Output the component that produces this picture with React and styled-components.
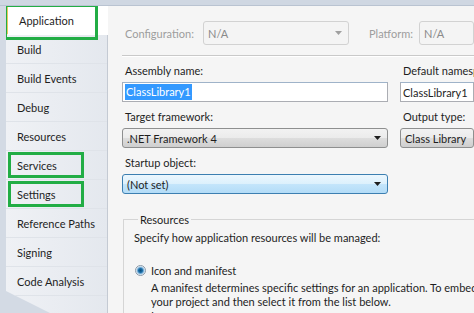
import styled, { createGlobalStyle } from "styled-components";

const GlobalStyle = createGlobalStyle`
    html, body {
        margin: 0;
        padding: 0;
        width: 474px;
        height: 313px;
        overflow: hidden;
        background: #d3dae4;
    }
    * {
        box-sizing: border-box;
    }
`

const tabs = [
    { name: "Application", selected: true, marked: true },
    { name: "Build" },
    { name: "Build Events" },
    { name: "Debug" },
    { name: "Resources" },
    { name: "Services", marked: true },
    { name: "Settings", marked: true },
    { name: "Reference Paths" },
    { name: "Signing" },
    { name: "Code Analysis" },
]

function Arrow({ muted }) {
    return (
        <svg width="7" height="4" viewBox="0 0 7 4">
            <path d="M0 0 L7 0 L3.5 4 Z" fill={muted ? "#a0a0a0" : "#1e1e1e"} />
        </svg>
    )
}

function Dropdown({ value, kind, width, muted }) {
    return (
        <Select kind={kind} fixed={width !== undefined} style={{ width }}>
            <SelectText muted={muted}>{value}</SelectText>
            {width !== undefined && <Arrow muted={muted} />}
        </Select>
    )
}

export default function App() {
    return (
        <Window>
            <GlobalStyle />
            <TopStrip />
            <Body>
                <TabRail>
                    {tabs.map(t => (
                        <Tab key={t.name} selected={t.selected}>
                            <TabLabel>{t.name}</TabLabel>
                            {t.marked && <Mark wide={t.selected} />}
                        </Tab>
                    ))}
                </TabRail>

                <Content>
                    <ConfigRow>
                        <MutedLabel w="80px">Configuration:</MutedLabel>
                        <Dropdown value="N/A" kind="disabled" width="146px" muted />
                        <MutedLabel w="52px" gap="18px">Platform:</MutedLabel>
                        <Dropdown value="N/A" kind="disabled" muted />
                    </ConfigRow>

                    <Divider />

                    <Grid>
                        <Field>
                            <Label>Assembly name:</Label>
                            <Input><Highlight>ClassLibrary1</Highlight></Input>
                        </Field>
                        <Field>
                            <Label>Default namespace:</Label>
                            <Input>ClassLibrary1</Input>
                        </Field>
                        <Field>
                            <Label>Target framework:</Label>
                            <Dropdown value=".NET Framework 4" kind="normal" width="266px" />
                        </Field>
                        <Field>
                            <Label>Output type:</Label>
                            <Dropdown value="Class Library" kind="normal" />
                        </Field>
                        <Field>
                            <Label>Startup object:</Label>
                            <Dropdown value="(Not set)" kind="hover" width="266px" />
                        </Field>
                    </Grid>

                    <Group>
                        <Legend>Resources</Legend>
                        <GroupText>Specify how application resources will be managed:</GroupText>
                        <RadioRow>
                            <Radio />
                            <span>Icon and manifest</span>
                        </RadioRow>
                        <Note first>A manifest determines specific settings for an application. To embed a custom manifest, first add it to</Note>
                        <Note>your project and then select it from the list below.</Note>
                        <Note>Icon:</Note>
                    </Group>
                </Content>
            </Body>
        </Window>
    )
}

const Window = styled.div`
    width: 474px;
    height: 313px;
    display: flex;
    flex-direction: column;
    font-family: Lato, "Noto Sans", sans-serif;
    font-size: 11px;
    color: #1e1e1e;
    background: #d3dae4;
`

const TopStrip = styled.div`
    height: 6px;
    flex-shrink: 0;
    background: #cfd7e2;
    border-bottom: 1px solid #b9c3d1;
`

const Body = styled.div`
    flex: 1;
    display: flex;
    padding-left: 6px;
    min-height: 0;
`

const TabRail = styled.div`
    width: 102px;
    flex-shrink: 0;
    display: flex;
    flex-direction: column;
    background: linear-gradient(to right, #eff1f5, #e4e8ee);
    border-right: 1px solid #c4cad3;
    clip-path: polygon(0 0, 100% 0, 100% 100%, 44px 100%, 0 calc(100% - 22px));
`

const Tab = styled.div`
    position: relative;
    height: 29px;
    flex-shrink: 0;
    display: flex;
    align-items: center;
    padding-left: 11px;
    margin-right: ${p => p.selected ? "-1px" : "0"};
    background: ${p => p.selected ? "#ffffff" : "transparent"};
    border-left: ${p => p.selected ? "2px solid #e8c85a" : "none"};
    border-bottom: 1px solid ${p => p.selected ? "#ffffff" : "#dfe3e9"};
`

const TabLabel = styled.span`
    color: #1e1e1e;
    white-space: nowrap;
`

const Mark = styled.div`
    position: absolute;
    top: ${p => p.wide ? "-2px" : "1px"};
    left: ${p => p.wide ? "-4px" : "2px"};
    width: ${p => p.wide ? "94px" : "76px"};
    height: ${p => p.wide ? "36px" : "26px"};
    border: 3px solid #22ad45;
`

const Content = styled.div`
    flex: 1;
    min-width: 0;
    background: #f5f5f5;
    padding: 15px 0 0 15px;
    display: flex;
    flex-direction: column;
    overflow: hidden;
`

const ConfigRow = styled.div`
    display: flex;
    align-items: center;
    white-space: nowrap;
    height: 24px;
`

const MutedLabel = styled.span`
    flex-shrink: 0;
    color: #9d9d9d;
    padding-left: 2px;
    width: ${p => p.w};
    margin-left: ${p => p.gap || "0"};
`

const Select = styled.div`
    height: ${p => p.kind === "disabled" ? "24px" : "20px"};
    flex: ${p => p.fixed ? "none" : "1 1 auto"};
    display: flex;
    align-items: center;
    justify-content: space-between;
    padding: 0 6px 0 4px;
    border-radius: 3px;
    white-space: nowrap;
    overflow: hidden;
    border: 1px solid ${p =>
        p.kind === "disabled" ? "#d2d2d2" :
        p.kind === "hover" ? "#3c7fb1" : "#8e8f8f"};
    background: ${p =>
        p.kind === "disabled" ? "#f4f4f4" :
        p.kind === "hover" ? "linear-gradient(#ecf7fe, #dcf0fc 50%, #c4e5fb 50%, #b3dcf7)" :
        "linear-gradient(#f2f2f2, #ebebeb 50%, #dddddd 50%, #cfcfcf)"};
    & > svg {
        flex-shrink: 0;
    }
`

const SelectText = styled.span`
    color: ${p => p.muted ? "#8a8a8a" : "#1e1e1e"};
`

const Divider = styled.div`
    height: 2px;
    margin: 10px 0 6px -1px;
    border-top: 1px solid #c9c9c9;
    border-bottom: 1px solid #ffffff;
`

const Grid = styled.div`
    display: grid;
    grid-template-columns: 266px 1fr;
    column-gap: 12px;
    row-gap: 7px;
    margin-left: -1px;
`

const Field = styled.div`
    display: flex;
    flex-direction: column;
    min-width: 0;
    white-space: nowrap;
`

const Label = styled.div`
    height: 16px;
    line-height: 16px;
    padding-left: 3px;
    margin-bottom: 3px;
    overflow: hidden;
    color: #1e1e1e;
`

const Input = styled.div`
    height: 20px;
    display: flex;
    align-items: center;
    padding-left: 2px;
    background: #ffffff;
    border: 1px solid #abadb3;
    border-top-color: #9fb3c9;
    overflow: hidden;
`

const Highlight = styled.span`
    background: #3399ff;
    color: #ffffff;
    padding: 0 1px;
    line-height: 16px;
`

const Group = styled.fieldset`
    margin: 19px 0 0 0;
    padding: 3px 0 0 10px;
    border: 1px solid #d5d5d5;
    border-right: none;
    border-bottom: none;
    white-space: nowrap;
`

const Legend = styled.legend`
    padding: 0 2px;
    margin-left: 4px;
    color: #1e1e1e;
`

const GroupText = styled.div`
    height: 18px;
    line-height: 18px;
`

const RadioRow = styled.div`
    margin-top: 15px;
    height: 16px;
    display: flex;
    align-items: center;
    gap: 5px;
    padding-left: 1px;
`

const Radio = styled.span`
    width: 11px;
    height: 11px;
    border-radius: 50%;
    border: 1px solid #8a99a8;
    background: radial-gradient(circle, #0c4c7a 0, #1a6ea8 2px, #9cc6e6 3.5px, #eef4f9 4.5px);
`

const Note = styled.div`
    padding-left: 17px;
    line-height: 14px;
    margin-top: ${p => p.first ? "3px" : "0"};
`
